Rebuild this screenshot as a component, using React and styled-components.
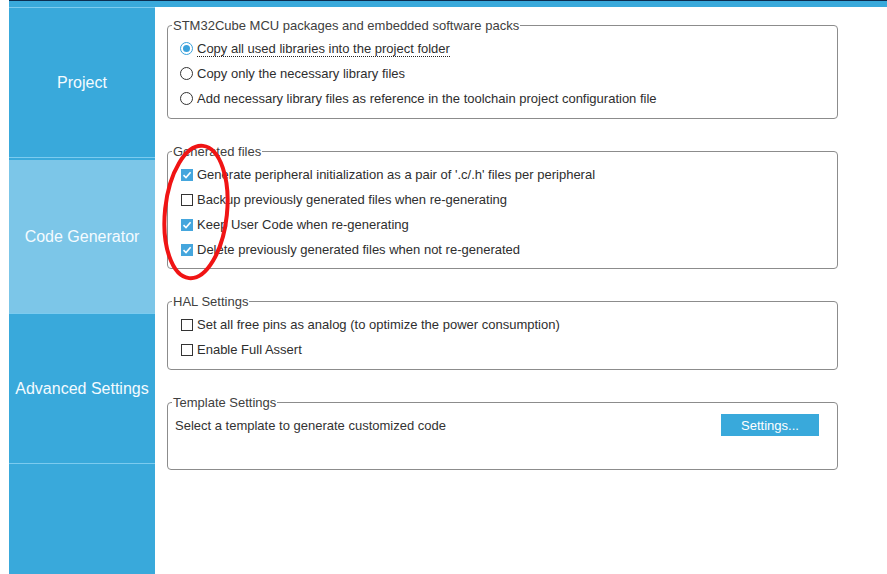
import styled, { createGlobalStyle } from 'styled-components';

const GlobalStyle = createGlobalStyle`
    body {
        margin: 0;
        background: #ffffff;
        font-family: "Liberation Sans", Arial, sans-serif;
    }
`

const Page = styled.div`
    position: relative;
    width: 887px;
    height: 574px;
    padding-left: 9px;
    box-sizing: border-box;
    display: flex;
    flex-direction: column;
    overflow: hidden;
    background: #ffffff;
`

const TopBar = styled.div`
    height: 6px;
    border-top: 1px solid #0c2d50;
    background: #39a9db;
    flex-shrink: 0;
`

const Body = styled.div`
    flex: 1;
    display: flex;
`

const Sidebar = styled.nav`
    width: 146px;
    flex-shrink: 0;
    background: #39a9db;
    display: flex;
    flex-direction: column;
`

const NavItem = styled.div`
    box-sizing: border-box;
    height: ${p => p.$height}px;
    border-top: 1px solid #7ccbef;
    padding-top: ${p => (p.$active ? 2 : 0)}px;
    background: ${p => (p.$active ? '#7cc6e8' : 'transparent')};
    background-clip: content-box;
    display: flex;
    align-items: center;
    justify-content: center;
    color: #f4fbff;
    font-size: 16px;
    flex-shrink: 0;
`

const Content = styled.main`
    flex: 1;
    padding: 11px 0 0 12px;
    display: flex;
    flex-direction: column;
    gap: 25px;
`

const Group = styled.fieldset`
    width: 671px;
    box-sizing: border-box;
    margin: 0;
    padding: 3px 0 ${p => p.$bottom}px 0;
    border: 1px solid #8c8c8c;
    border-radius: 4px;
`

const Legend = styled.legend`
    margin-left: 4px;
    padding: 0 1px;
    font-size: 13px;
    line-height: 15px;
    color: #404040;
`

const Row = styled.div`
    height: 25px;
    display: flex;
    align-items: center;
    padding-left: 12px;
    gap: 4px;
    font-size: 13px;
    color: #2e2e2e;
`

const Radio = styled.span`
    width: 11px;
    height: 11px;
    border-radius: 50%;
    border: 1px solid ${p => (p.$on ? '#3aa2dc' : '#333333')};
    background: #ffffff;
    display: flex;
    align-items: center;
    justify-content: center;
    flex-shrink: 0;

    &::after {
        content: '';
        width: 7px;
        height: 7px;
        border-radius: 50%;
        background: ${p => (p.$on ? '#3aa2dc' : 'transparent')};
    }
`

const Check = styled.span`
    width: 12px;
    height: 12px;
    box-sizing: border-box;
    border: 1px solid ${p => (p.$on ? '#45a6dd' : '#333333')};
    background: ${p => (p.$on ? '#45a6dd' : '#ffffff')};
    display: flex;
    align-items: center;
    justify-content: center;
    flex-shrink: 0;
    margin-left: 1px;
`

const Label = styled.span`
    border-bottom: 1px dotted ${p => (p.$focus ? '#222' : 'transparent')};
    line-height: 14px;
    margin-top: 2px;
`

const TemplateRow = styled.div`
    height: 25px;
    display: flex;
    align-items: center;
    justify-content: space-between;
    padding: 0 18px 0 7px;
    font-size: 13px;
    color: #333333;
`

const Button = styled.button`
    width: 98px;
    height: 22px;
    border: none;
    background: #39a9db;
    color: #ffffff;
    font-family: "Liberation Sans", Arial, sans-serif;
    font-size: 13px;
    padding: 0;
    margin-top: -1px;
`

const Spacer = styled.div`
    height: 24px;
`

const Annotation = styled.svg`
    position: absolute;
    left: 150px;
    top: 130px;
    pointer-events: none;
`

const Tick = () => (
    <svg width="10" height="10" viewBox="0 0 10 10">
        <path d="M1.5 5.2 L4 7.6 L8.6 2.2" fill="none" stroke="#ffffff" strokeWidth="1.6" />
    </svg>
)

const CheckRow = ({ on, children }) => (
    <Row>
        <Check $on={on}>{on && <Tick />}</Check>
        <Label>{children}</Label>
    </Row>
)

const App = () => {
    return (
        <>
            <GlobalStyle />
            <Page>
                <TopBar />
                <Body>
                    <Sidebar>
                        <NavItem $height={150}>Project</NavItem>
                        <NavItem $height={156} $active>Code Generator</NavItem>
                        <NavItem $height={150}>Advanced Settings</NavItem>
                        <NavItem $height={120} />
                    </Sidebar>
                    <Content>
                        <Group $bottom={7}>
                            <Legend>STM32Cube MCU packages and embedded software packs</Legend>
                            <Row>
                                <Radio $on />
                                <Label $focus>Copy all used libraries into the project folder</Label>
                            </Row>
                            <Row>
                                <Radio />
                                <Label>Copy only the necessary library files</Label>
                            </Row>
                            <Row>
                                <Radio />
                                <Label>Add necessary library files as reference in the toolchain project configuration file</Label>
                            </Row>
                        </Group>
                        <Group $bottom={6}>
                            <Legend>Generated files</Legend>
                            <CheckRow on>Generate peripheral initialization as a pair of '.c/.h' files per peripheral</CheckRow>
                            <CheckRow>Backup previously generated files when re-generating</CheckRow>
                            <CheckRow on>Keep User Code when re-generating</CheckRow>
                            <CheckRow on>Delete previously generated files when not re-generated</CheckRow>
                        </Group>
                        <Group $bottom={7}>
                            <Legend>HAL Settings</Legend>
                            <CheckRow>Set all free pins as analog (to optimize the power consumption)</CheckRow>
                            <CheckRow>Enable Full Assert</CheckRow>
                        </Group>
                        <Group $bottom={7}>
                            <Legend>Template Settings</Legend>
                            <TemplateRow>
                                <span>Select a template to generate customized code</span>
                                <Button>Settings...</Button>
                            </TemplateRow>
                            <Spacer />
                        </Group>
                    </Content>
                </Body>
                <Annotation width="100" height="170" viewBox="0 0 100 170">
                    <ellipse cx="46" cy="82" rx="31" ry="66.5" fill="none" stroke="#f01414" strokeWidth="4" transform="rotate(6 46 82)" />
                </Annotation>
            </Page>
        </>
    )
}

export default App;
